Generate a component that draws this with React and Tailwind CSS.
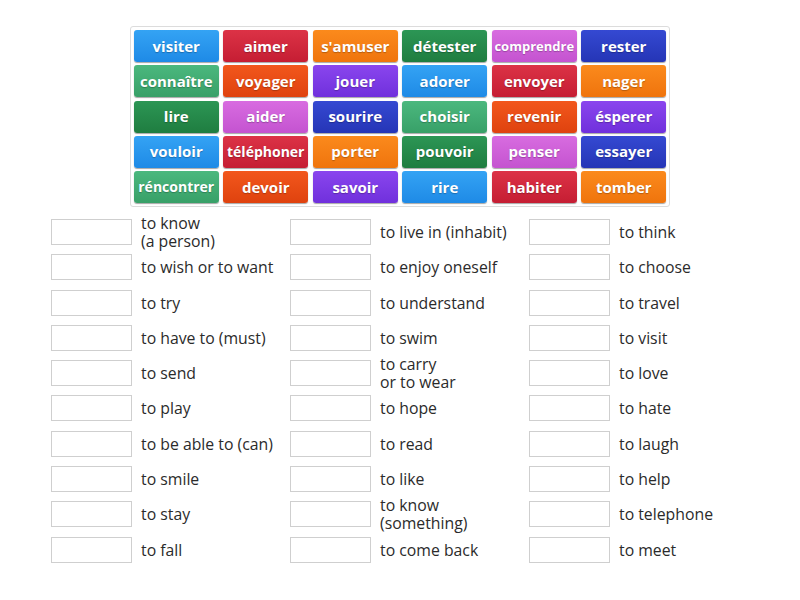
import React from 'react';

const tiles = [
  'visiter', 'aimer', "s'amuser", 'détester', 'comprendre', 'rester',
  'connaître', 'voyager', 'jouer', 'adorer', 'envoyer', 'nager',
  'lire', 'aider', 'sourire', 'choisir', 'revenir', 'ésperer',
  'vouloir', 'téléphoner', 'porter', 'pouvoir', 'penser', 'essayer',
  'réncontrer', 'devoir', 'savoir', 'rire', 'habiter', 'tomber',
];

// colour cycle repeats every 9 tiles
const colors = [
  'bg-gradient-to-b from-[#34a3f4] to-[#1e8ae6]',
  'bg-gradient-to-b from-[#dc3246] to-[#c51d33]',
  'bg-gradient-to-b from-[#fb8a1c] to-[#ef740c]',
  'bg-gradient-to-b from-[#2c9655] to-[#1f7d40]',
  'bg-gradient-to-b from-[#d86ce0] to-[#c453d0]',
  'bg-gradient-to-b from-[#3549d2] to-[#2535b6]',
  'bg-gradient-to-b from-[#4bb87e] to-[#38a068]',
  'bg-gradient-to-b from-[#f2571c] to-[#df420e]',
  'bg-gradient-to-b from-[#8a45ee] to-[#7030dc]',
];

const small = {
  comprendre: 'text-[13px]',
  téléphoner: 'text-[14px]',
  réncontrer: 'text-[14px]',
};

const columns = [
  [
    ['to know', '(a person)'],
    ['to wish or to want'],
    ['to try'],
    ['to have to (must)'],
    ['to send'],
    ['to play'],
    ['to be able to (can)'],
    ['to smile'],
    ['to stay'],
    ['to fall'],
  ],
  [
    ['to live in (inhabit)'],
    ['to enjoy oneself'],
    ['to understand'],
    ['to swim'],
    ['to carry', 'or to wear'],
    ['to hope'],
    ['to read'],
    ['to like'],
    ['to know', '(something)'],
    ['to come back'],
  ],
  [
    ['to think'],
    ['to choose'],
    ['to travel'],
    ['to visit'],
    ['to love'],
    ['to hate'],
    ['to laugh'],
    ['to help'],
    ['to telephone'],
    ['to meet'],
  ],
];

const App = () => {
  return (
    <div className="w-[800px] h-[600px] bg-white overflow-hidden" style={{ fontFamily: '"Open Sans", sans-serif' }}>
      <div className="pt-[26px] flex justify-center">
        <div className="border border-[#dcdcdc] rounded-[3px] p-[3px] pb-[3px] grid grid-cols-[repeat(6,85px)] auto-rows-[32px] gap-x-[4.5px] gap-y-[3.25px]">
          {tiles.map((t, i) => (
            <div
              key={t}
              className={`${colors[i % 9]} ${small[t] || 'text-[15px]'} rounded-[3px] shadow-[0_1px_1px_rgba(0,0,0,0.35)] flex items-center justify-center text-white font-bold leading-none whitespace-nowrap [text-shadow:0_1px_1px_rgba(0,0,0,0.25)]`}
            >
              {t}
            </div>
          ))}
        </div>
      </div>

      <div className="pl-[51px] pt-[12px] flex">
        {columns.map((col, c) => (
          <div key={c} className="w-[239px] flex flex-col gap-y-[9.3px]">
            {col.map((lines, r) => (
              <div key={r} className="flex items-center h-[26px]">
                <div className="w-[81px] h-[26px] border border-[#cfcfcf] bg-white shrink-0" />
                <div className="ml-[9px] text-[15.8px] leading-[18px] text-[#2b2b2b] whitespace-nowrap">
                  {lines.map((l) => (
                    <div key={l}>{l}</div>
                  ))}
                </div>
              </div>
            ))}
          </div>
        ))}
      </div>
    </div>
  );
};

export default App;
